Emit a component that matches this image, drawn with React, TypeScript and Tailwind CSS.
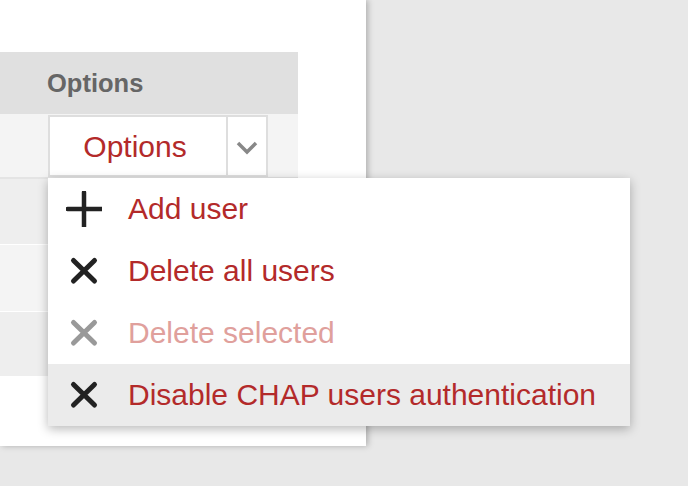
import { ReactNode } from 'react';

interface MenuItem {
  label: string;
  icon: 'plus' | 'x';
  disabled?: boolean;
  active?: boolean;
}

const items: MenuItem[] = [
  { label: 'Add user', icon: 'plus' },
  { label: 'Delete all users', icon: 'x' },
  { label: 'Delete selected', icon: 'x', disabled: true },
  { label: 'Disable CHAP users authentication', icon: 'x', active: true },
];

function Icon({ kind, color }: { kind: 'plus' | 'x'; color: string }) {
  if (kind === 'plus') {
    return (
      <svg width="36" height="36" viewBox="0 0 36 36" fill="none">
        <path d="M18 1.5v34M1.5 18h34" stroke={color} strokeWidth="4.5" strokeLinecap="round" />
      </svg>
    );
  }
  return (
    <svg width="36" height="36" viewBox="0 0 36 36" fill="none">
      <path d="M7.5 7.5l21 20.5M28.5 7.5l-21 20.5" stroke={color} strokeWidth="5" strokeLinecap="round" />
    </svg>
  );
}

function Row({ className, children }: { className: string; children?: ReactNode }) {
  return <div className={`w-[298px] ${className}`}>{children}</div>;
}

export default function App() {
  return (
    <div className="relative w-[688px] h-[486px] bg-[#e8e8e8] overflow-hidden" style={{ fontFamily: '"Liberation Sans", Arial, sans-serif' }}>
      <div className="w-[366px] h-[446px] bg-white pt-[52px] shadow-[2px_0_6px_rgba(0,0,0,0.25)]">
        <Row className="h-[62px] bg-[#e0e0e0] flex items-center pl-[47px]">
          <span className="text-[25.5px] font-bold text-[#666666]">Options</span>
        </Row>
        <Row className="h-[65px] bg-[#f4f4f4] border-b-2 border-[#e4e4e4] pt-px">
          <div className="ml-[48px] w-[220px] h-[62px] bg-white border-2 border-[#dedede] flex">
            <div className="w-[178px] pr-[6px] border-r-2 border-[#dedede] flex items-center justify-center text-[30px] text-[#b32a2a]">
              Options
            </div>
            <div className="flex-1 flex items-center justify-center pt-[4px]">
              <svg width="22" height="14" viewBox="0 0 22 14" fill="none">
                <path d="M2 2l9 9 9-9" stroke="#888888" strokeWidth="3.5" />
              </svg>
            </div>
          </div>
        </Row>
        <Row className="h-[66px] bg-[#eeeeee] border-b border-white" />
        <Row className="h-[67px] bg-[#f4f4f4] border-b border-white" />
        <Row className="h-[64px] bg-[#eeeeee]" />
      </div>

      <div className="absolute left-[48px] top-[178px] w-[582px] bg-white shadow-[0_3px_10px_rgba(0,0,0,0.28)]">
        {items.map(item => (
          <div
            key={item.label}
            className={`h-[62px] flex items-center ${item.active ? 'bg-[#ebebeb]' : ''}`}
          >
            <div className="w-[80px] pl-[18px] flex items-center">
              <Icon kind={item.icon} color={item.disabled ? '#999999' : '#222222'} />
            </div>
            <span className={`text-[30px] leading-none ${item.disabled ? 'text-[#e0a09c]' : 'text-[#b32a2a]'}`}>
              {item.label}
            </span>
          </div>
        ))}
      </div>
    </div>
  );
}
